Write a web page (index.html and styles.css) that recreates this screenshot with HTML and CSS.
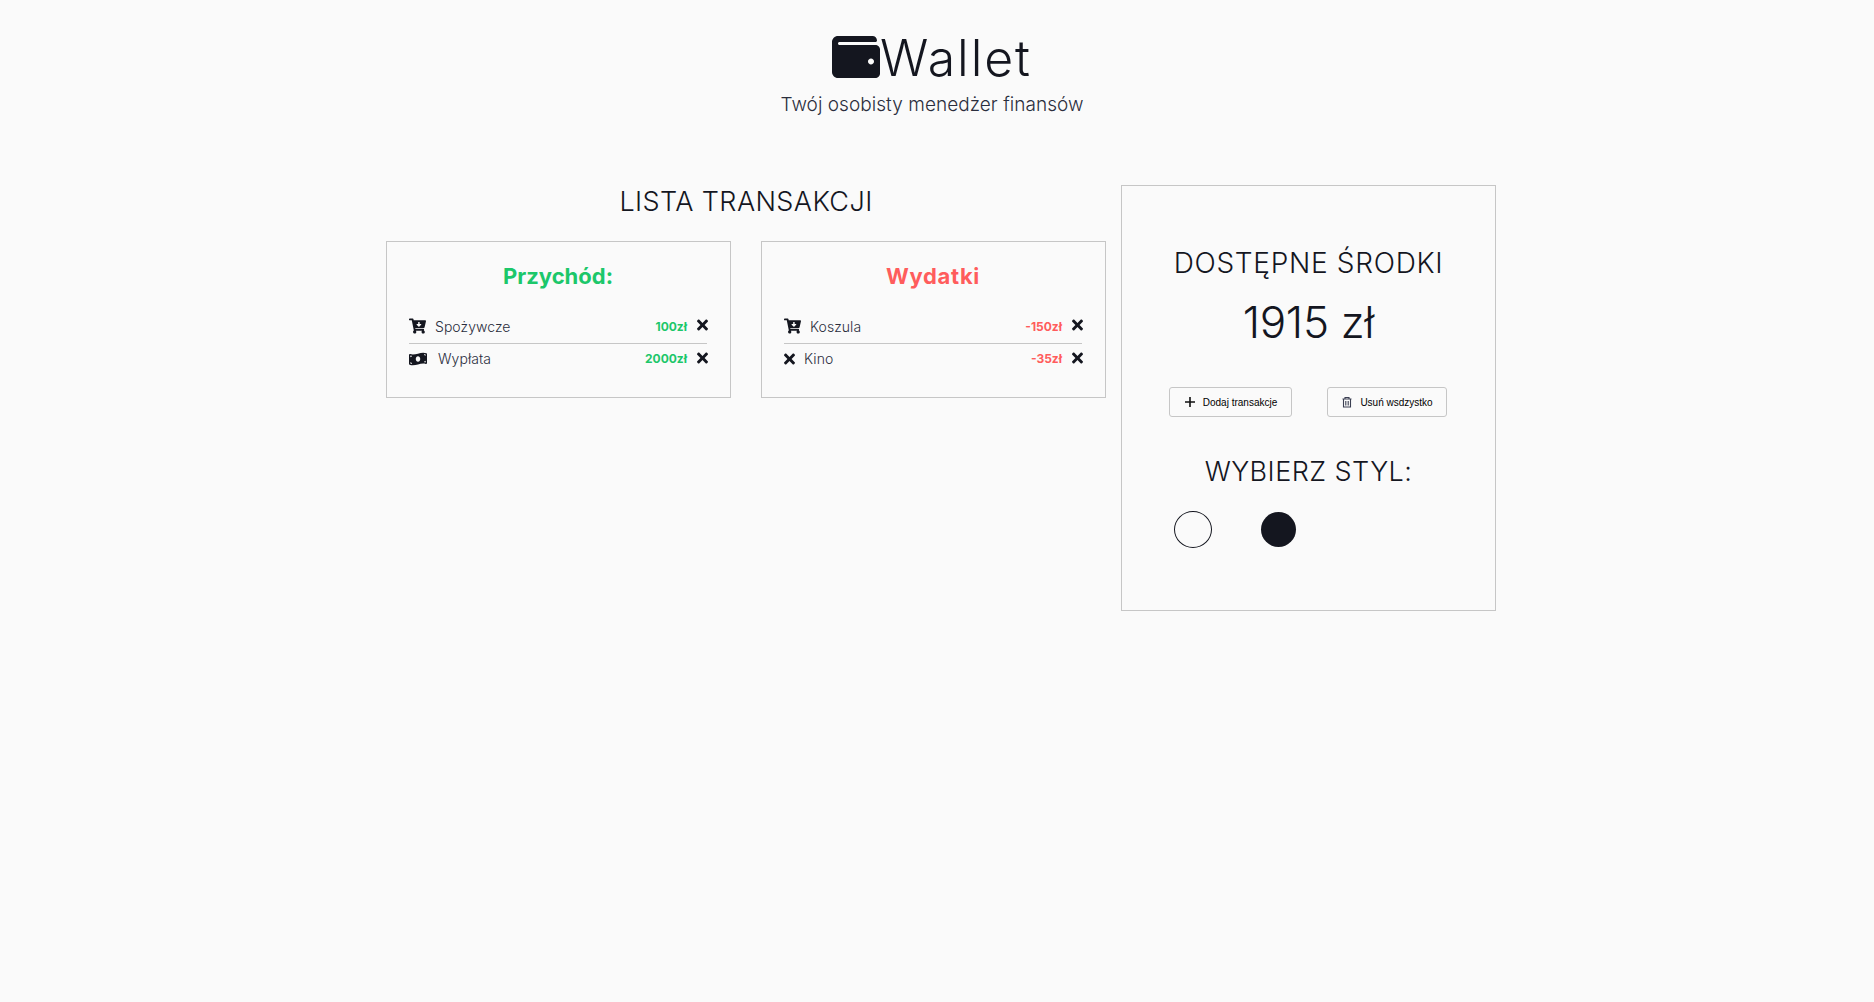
FILE: index.html
```html
<!DOCTYPE html>
<html lang="pl">
<head>
    <meta charset="UTF-8">
    <meta name="viewport" content="width=device-width, initial-scale=1.0">
    <title>Wallet</title>
    <link rel="stylesheet" href="styles.css">
</head>
<body>
    <header class="page-header">
        <h1>
            <svg class="logo" viewBox="0 0 512 512"><path d="M461.2 128H80c-8.84 0-16-7.16-16-16s7.16-16 16-16h384c8.84 0 16-7.16 16-16 0-26.51-21.49-48-48-48H64C28.65 32 0 60.65 0 96v320c0 35.35 28.65 64 64 64h397.2c28.02 0 50.8-21.53 50.8-48V176c0-26.47-22.78-48-50.8-48zM416 336c-17.67 0-32-14.33-32-32s14.33-32 32-32 32 14.33 32 32-14.33 32-32 32z"/></svg>Wallet
        </h1>
        <p class="subtitle">Twój osobisty menedżer finansów</p>
    </header>

    <main class="wrapper">
        <section class="transactions">
            <h2 class="section-title">LISTA TRANSAKCJI</h2>
            <div class="cards">
                <div class="card">
                    <h3 class="card-title income">Przychód:</h3>
                    <div class="row">
                        <svg class="ico cart" viewBox="0 0 576 512"><path d="M504.717 320H211.572l6.545 32h268.418c15.401 0 26.816 14.301 23.403 29.319l-5.517 24.276C523.112 414.668 536 433.828 536 456c0 31.202-25.519 56.444-56.824 55.994-29.823-.429-54.35-24.631-55.155-54.447-.44-16.287 6.085-31.049 16.803-41.548H231.176C241.553 426.165 248 440.326 248 456c0 31.813-26.528 57.431-58.67 55.938-28.54-1.325-51.751-24.385-53.251-52.917-1.158-22.034 10.436-41.455 28.051-51.586L93.883 64H24C10.745 64 0 53.255 0 40V24C0 10.745 10.745 0 24 0h102.529c11.401 0 21.228 8.021 23.513 19.19L159.208 64H551.99c15.401 0 26.816 14.301 23.403 29.319l-47.273 208C525.637 312.246 515.923 320 504.717 320zM403.029 192H360v-60c0-6.627-5.373-12-12-12h-24c-6.627 0-12 5.373-12 12v60h-43.029c-10.691 0-16.045 12.926-8.485 20.485l67.029 67.029c4.686 4.686 12.284 4.686 16.971 0l67.029-67.029c7.559-7.559 2.205-20.485-8.486-20.485z"/></svg>
                        <span class="name">Spożywcze</span>
                        <span class="amount income">100zł</span>
                        <svg class="ico del" viewBox="0 0 352 512"><path d="M242.72 256l100.07-100.07c12.28-12.28 12.28-32.19 0-44.48l-22.24-22.24c-12.28-12.28-32.19-12.28-44.48 0L176 189.28 75.93 89.21c-12.28-12.28-32.19-12.28-44.48 0L9.21 111.45c-12.28 12.28-12.28 32.19 0 44.48L109.28 256 9.21 356.07c-12.28 12.28-12.28 32.19 0 44.48l22.24 22.24c12.28 12.28 32.2 12.28 44.48 0L176 322.72l100.07 100.07c12.28 12.28 32.2 12.28 44.48 0l22.24-22.24c12.28-12.28 12.28-32.19 0-44.48L242.72 256z"/></svg>
                    </div>
                    <div class="row">
                        <svg class="ico bill" viewBox="0 0 640 512"><path d="M621.16 54.46C582.37 38.19 543.55 32 504.75 32c-123.17-.01-246.33 62.34-369.5 62.34-30.89 0-61.76-3.92-92.65-13.72-3.47-1.1-6.95-1.62-10.35-1.62C15.04 79 0 92.32 0 110.81v317.26c0 12.63 7.23 24.6 18.84 29.46C57.63 473.81 96.45 480 135.25 480c123.17 0 246.34-62.35 369.51-62.35 30.89 0 61.76 3.92 92.65 13.72 3.47 1.1 6.95 1.62 10.35 1.62 17.21 0 32.25-13.32 32.25-31.81V83.93c-.01-12.64-7.24-24.6-18.85-29.47zM48 132.22c20.12 5.04 41.12 7.57 62.72 8.93C104.84 170.54 79 192.69 48 192.69v-60.47zm0 285v-47.78c34.37 0 62.18 27.27 63.71 61.4-22.53-1.81-43.59-6.31-63.71-13.62zM320 352c-44.19 0-80-42.99-80-96 0-53.02 35.82-96 80-96s80 42.98 80 96c0 53.03-35.83 96-80 96zm272 27.78c-17.52-4.39-35.71-6.85-54.32-8.44 5.87-26.08 27.5-45.88 54.32-49.28v57.72zm0-236.11c-30.89-3.91-54.86-29.7-55.81-61.55 19.54 2.17 38.09 6.23 55.81 12.66v48.89z"/></svg>
                        <span class="name">Wypłata</span>
                        <span class="amount income">2000zł</span>
                        <svg class="ico del" viewBox="0 0 352 512"><path d="M242.72 256l100.07-100.07c12.28-12.28 12.28-32.19 0-44.48l-22.24-22.24c-12.28-12.28-32.19-12.28-44.48 0L176 189.28 75.93 89.21c-12.28-12.28-32.19-12.28-44.48 0L9.21 111.45c-12.28 12.28-12.28 32.19 0 44.48L109.28 256 9.21 356.07c-12.28 12.28-12.28 32.19 0 44.48l22.24 22.24c12.28 12.28 32.2 12.28 44.48 0L176 322.72l100.07 100.07c12.28 12.28 32.2 12.28 44.48 0l22.24-22.24c12.28-12.28 12.28-32.19 0-44.48L242.72 256z"/></svg>
                    </div>
                </div>

                <div class="card">
                    <h3 class="card-title expense">Wydatki</h3>
                    <div class="row">
                        <svg class="ico cart" viewBox="0 0 576 512"><path d="M504.717 320H211.572l6.545 32h268.418c15.401 0 26.816 14.301 23.403 29.319l-5.517 24.276C523.112 414.668 536 433.828 536 456c0 31.202-25.519 56.444-56.824 55.994-29.823-.429-54.35-24.631-55.155-54.447-.44-16.287 6.085-31.049 16.803-41.548H231.176C241.553 426.165 248 440.326 248 456c0 31.813-26.528 57.431-58.67 55.938-28.54-1.325-51.751-24.385-53.251-52.917-1.158-22.034 10.436-41.455 28.051-51.586L93.883 64H24C10.745 64 0 53.255 0 40V24C0 10.745 10.745 0 24 0h102.529c11.401 0 21.228 8.021 23.513 19.19L159.208 64H551.99c15.401 0 26.816 14.301 23.403 29.319l-47.273 208C525.637 312.246 515.923 320 504.717 320zM403.029 192H360v-60c0-6.627-5.373-12-12-12h-24c-6.627 0-12 5.373-12 12v60h-43.029c-10.691 0-16.045 12.926-8.485 20.485l67.029 67.029c4.686 4.686 12.284 4.686 16.971 0l67.029-67.029c7.559-7.559 2.205-20.485-8.486-20.485z"/></svg>
                        <span class="name">Koszula</span>
                        <span class="amount expense">-150zł</span>
                        <svg class="ico del" viewBox="0 0 352 512"><path d="M242.72 256l100.07-100.07c12.28-12.28 12.28-32.19 0-44.48l-22.24-22.24c-12.28-12.28-32.19-12.28-44.48 0L176 189.28 75.93 89.21c-12.28-12.28-32.19-12.28-44.48 0L9.21 111.45c-12.28 12.28-12.28 32.19 0 44.48L109.28 256 9.21 356.07c-12.28 12.28-12.28 32.19 0 44.48l22.24 22.24c12.28 12.28 32.2 12.28 44.48 0L176 322.72l100.07 100.07c12.28 12.28 32.2 12.28 44.48 0l22.24-22.24c12.28-12.28 12.28-32.19 0-44.48L242.72 256z"/></svg>
                    </div>
                    <div class="row">
                        <svg class="ico times" viewBox="0 0 352 512"><path d="M242.72 256l100.07-100.07c12.28-12.28 12.28-32.19 0-44.48l-22.24-22.24c-12.28-12.28-32.19-12.28-44.48 0L176 189.28 75.93 89.21c-12.28-12.28-32.19-12.28-44.48 0L9.21 111.45c-12.28 12.28-12.28 32.19 0 44.48L109.28 256 9.21 356.07c-12.28 12.28-12.28 32.19 0 44.48l22.24 22.24c12.28 12.28 32.2 12.28 44.48 0L176 322.72l100.07 100.07c12.28 12.28 32.2 12.28 44.48 0l22.24-22.24c12.28-12.28 12.28-32.19 0-44.48L242.72 256z"/></svg>
                        <span class="name">Kino</span>
                        <span class="amount expense">-35zł</span>
                        <svg class="ico del" viewBox="0 0 352 512"><path d="M242.72 256l100.07-100.07c12.28-12.28 12.28-32.19 0-44.48l-22.24-22.24c-12.28-12.28-32.19-12.28-44.48 0L176 189.28 75.93 89.21c-12.28-12.28-32.19-12.28-44.48 0L9.21 111.45c-12.28 12.28-12.28 32.19 0 44.48L109.28 256 9.21 356.07c-12.28 12.28-12.28 32.19 0 44.48l22.24 22.24c12.28 12.28 32.2 12.28 44.48 0L176 322.72l100.07 100.07c12.28 12.28 32.2 12.28 44.48 0l22.24-22.24c12.28-12.28 12.28-32.19 0-44.48L242.72 256z"/></svg>
                    </div>
                </div>
            </div>
        </section>

        <aside class="panel">
            <h2 class="balance-title">DOSTĘPNE ŚRODKI</h2>
            <p class="balance">1915 zł</p>
            <div class="buttons">
                <button class="btn btn-add">
                    <svg class="btn-ico" viewBox="0 0 12 12"><path d="M6 1v10M1 6h10" fill="none" stroke="#111" stroke-width="1.6"/></svg>
                    Dodaj transakcje
                </button>
                <button class="btn btn-clear">
                    <svg class="btn-ico" viewBox="0 0 12 12"><path d="M1.5 3h9M4 3V1.5h4V3M2.5 3v8h7V3M4.8 5v4.5M7.2 5v4.5" fill="none" stroke="#3b3f52" stroke-width="1.1"/></svg>
                    Usuń wsdzystko
                </button>
            </div>
            <h2 class="style-title">WYBIERZ STYL:</h2>
            <div class="themes">
                <span class="theme theme-light"></span>
                <span class="theme theme-dark"></span>
            </div>
        </aside>
    </main>
</body>
</html>
```

FILE: styles.css
```css
:root {
    --dark: #14161f;
    --line: #c6c6c6;
    --green: #1cc76a;
    --red: #ff5c5c;
}

* {
    box-sizing: border-box;
}

body {
    margin: 0;
    min-height: 100vh;
    background-color: #fafafa;
    color: var(--dark);
    font-family: "Inter", "Open Sans", sans-serif;
}

/* naglowek */
.page-header {
    padding: 31px 10px 0 0;
    text-align: center;
}

.page-header h1 {
    display: flex;
    justify-content: center;
    align-items: center;
    height: 54px;
    margin: 0;
    font-size: 50px;
    font-weight: 300;
    letter-spacing: 1.9px;
}

.logo {
    width: 48px;
    height: 48px;
    margin-top: -2px;
    fill: var(--dark);
}

.subtitle {
    margin: 8px 0 0;
    font-size: 19px;
    font-weight: 300;
    letter-spacing: 0.05px;
    color: #2b2e3d;
}

/* uklad */
.wrapper {
    display: flex;
    gap: 15px;
    width: 1110px;
    margin: 69px 0 0 386px;
    align-items: flex-start;
}

.transactions {
    width: 720px;
}

.section-title {
    margin: 0;
    height: 56px;
    padding-top: 1px;
    text-align: center;
    font-size: 27px;
    font-weight: 300;
    line-height: 32px;
    letter-spacing: 0.4px;
}

.cards {
    display: flex;
    gap: 30px;
}

.card {
    width: 345px;
    height: 157px;
    padding: 20px 23px 0 22px;
    border: 1px solid var(--line);
}

.card-title {
    margin: 0 0 21px;
    text-align: center;
    font-size: 22px;
    line-height: 28px;
    font-weight: 700;
}

.card-title.expense {
    letter-spacing: 0.7px;
}

.income {
    color: var(--green);
}

.expense {
    color: var(--red);
}

.row {
    display: flex;
    align-items: center;
    height: 32px;
    padding-bottom: 2px;
    font-size: 14px;
}

.row + .row {
    border-top: 1px solid var(--line);
}

.ico {
    height: 16px;
    fill: var(--dark);
    flex: none;
}

.cart {
    width: 17px;
    margin-right: 9px;
}

.bill {
    width: 18px;
    margin-right: 11px;
}

.times {
    width: 11px;
    margin-right: 9px;
}

.name {
    flex: 1;
    font-weight: 300;
    letter-spacing: 0.05px;
    color: #2b2e3d;
}

.amount {
    font-size: 12px;
    font-weight: 700;
    margin-right: 10px;
}

.del {
    width: 11px;
    margin-top: -2px;
    margin-right: -1px;
}

/* panel boczny */
.panel {
    width: 375px;
    height: 426px;
    padding: 60px 0 0;
    border: 1px solid var(--line);
    text-align: center;
}

.balance-title,
.style-title {
    margin: 0;
    font-size: 27px;
    line-height: 34px;
    font-weight: 300;
}

.balance-title {
    font-size: 28px;
    letter-spacing: 0.7px;
}

.style-title {
    margin-top: 38px;
    letter-spacing: 0.45px;
}

.balance {
    margin: 13px 0 0;
    font-size: 44px;
    line-height: 58px;
    font-weight: 300;
    letter-spacing: -0.3px;
}

.buttons {
    display: flex;
    gap: 35px;
    margin: 36px 0 0 47px;
}

.btn {
    display: flex;
    align-items: center;
    justify-content: center;
    gap: 7px;
    height: 30px;
    padding: 0;
    background: none;
    border: 1px solid var(--line);
    border-radius: 3px;
    color: #000;
    font-family: "Liberation Sans", Arial, sans-serif;
    font-size: 10px;
}

.btn-add {
    width: 123px;
}

.btn-clear {
    width: 120px;
}

.btn-ico {
    width: 12px;
    height: 12px;
    flex: none;
}

.themes {
    display: flex;
    align-items: center;
    gap: 49px;
    margin: 22px 0 0 52px;
}

.theme {
    border-radius: 50%;
}

.theme-light {
    width: 38px;
    height: 37px;
    border: 1px solid var(--dark);
}

.theme-dark {
    width: 35px;
    height: 35px;
    background-color: var(--dark);
}
```
